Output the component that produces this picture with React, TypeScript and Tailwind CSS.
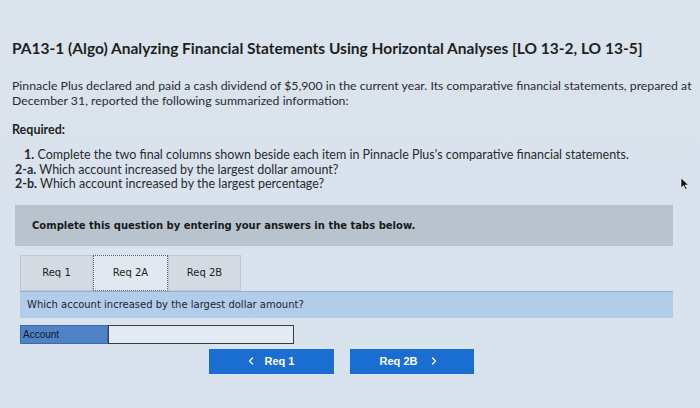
import { ChevronLeft, ChevronRight } from 'lucide-react'

const tabs = ['Req 1', 'Req 2A', 'Req 2B']

export default function App() {
  return (
    <div className="relative w-[700px] h-[408px] overflow-hidden bg-gradient-to-b from-[#dbe3ec] to-[#d8e2ed] text-[#1e1f22]" style={{ fontFamily: 'Lato, "Open Sans", sans-serif' }}>
      {/* Heading */}
      <div className="pt-[38px] pl-[12px]">
        <h1 className="text-[15.5px] font-bold leading-[20px] whitespace-nowrap">
          PA13-1 (Algo) Analyzing Financial Statements Using Horizontal Analyses [LO 13-2, LO 13-5]
        </h1>
      </div>

      {/* Intro */}
      <div className="mt-[21px] pl-[12px] text-[12.3px] leading-[14.5px] whitespace-nowrap text-[#2a2b2e]">
        <p>Pinnacle Plus declared and paid a cash dividend of $5,900 in the current year. Its comparative financial statements, prepared at</p>
        <p>December 31, reported the following summarized information:</p>
      </div>

      <p className="mt-[14px] pl-[12px] text-[12.5px] font-bold leading-[16px]">Required:</p>

      <div className="mt-[10px] pl-[15px] text-[12.5px] leading-[14.5px] text-[#2a2b2e]">
        <p className="pl-[9px]"><b>1.</b> Complete the two final columns shown beside each item in Pinnacle Plus's comparative financial statements.</p>
        <p><b>2-a.</b> Which account increased by the largest dollar amount?</p>
        <p><b>2-b.</b> Which account increased by the largest percentage?</p>
      </div>

      {/* Instructions panel */}
      <div className="ml-[15px] mt-[13px] w-[658px] h-[41px] bg-[#b9c3ce] flex items-center pl-[17px]">
        <p className="text-[10px] font-bold text-[#18191b]" style={{ fontFamily: '"DejaVu Sans", Verdana, sans-serif' }}>
          Complete this question by entering your answers in the tabs below.
        </p>
      </div>

      <div className="ml-[20px] mt-[9px] w-[653px]" style={{ fontFamily: '"DejaVu Sans", Verdana, sans-serif' }}>
        {/* Tabs */}
        <div className="flex h-[36px]">
          {tabs.map((t, i) => (
            <div
              key={t}
              className={
                i === 1
                  ? 'w-[75px] flex items-center justify-center bg-[#e2e8ef] border border-dotted border-[#5b6470] text-[10px]'
                  : 'w-[73px] flex items-center justify-center bg-[#d4dae1] border border-[#c2c8cf] text-[10px]'
              }
            >
              {t}
            </div>
          ))}
        </div>

        {/* Question bar */}
        <div className="h-[27px] bg-[#b2cdea] border-t border-[#8fb0d4] flex items-center pl-[7px]">
          <p className="text-[10px] text-[#1d2430]">Which account increased by the largest dollar amount?</p>
        </div>

        {/* Answer row */}
        <div className="mt-[7px] flex h-[19px]">
          <div className="w-[88px] bg-[#4f82c6] border border-[#3d6aa8] flex items-center pl-[2px] text-[10px] text-[#0f1a2c]" style={{ fontFamily: '"Liberation Sans", Arial, sans-serif' }}>
            Account
          </div>
          <div className="w-[186px] bg-[#e4eaf1] border border-[#3a3e44]" />
        </div>

        {/* Nav buttons */}
        <div className="mt-[5px] flex gap-[16px] pl-[189px]" style={{ fontFamily: '"Liberation Sans", Arial, sans-serif' }}>
          <button className="w-[125px] h-[25px] bg-[#1a6ed2] text-white text-[11px] font-bold flex items-center justify-center gap-[8px] pr-[4px]">
            <ChevronLeft size={12} strokeWidth={2.5} />
            <span>Req 1</span>
          </button>
          <button className="w-[124px] h-[25px] bg-[#1a6ed2] text-white text-[11px] font-bold flex items-center justify-center gap-[11px] pr-[4px]">
            <span>Req 2B</span>
            <ChevronRight size={12} strokeWidth={2.5} />
          </button>
        </div>
      </div>

      {/* Mouse pointer */}
      <svg className="absolute left-[680px] top-[177px]" width="10" height="13" viewBox="0 0 10 13">
        <path d="M1 1 L1 11 L3.5 8.5 L5.5 12.5 L7 11.8 L5 8 L8.5 8 Z" fill="#111" stroke="#fff" strokeWidth="0.6" />
      </svg>
    </div>
  )
}
